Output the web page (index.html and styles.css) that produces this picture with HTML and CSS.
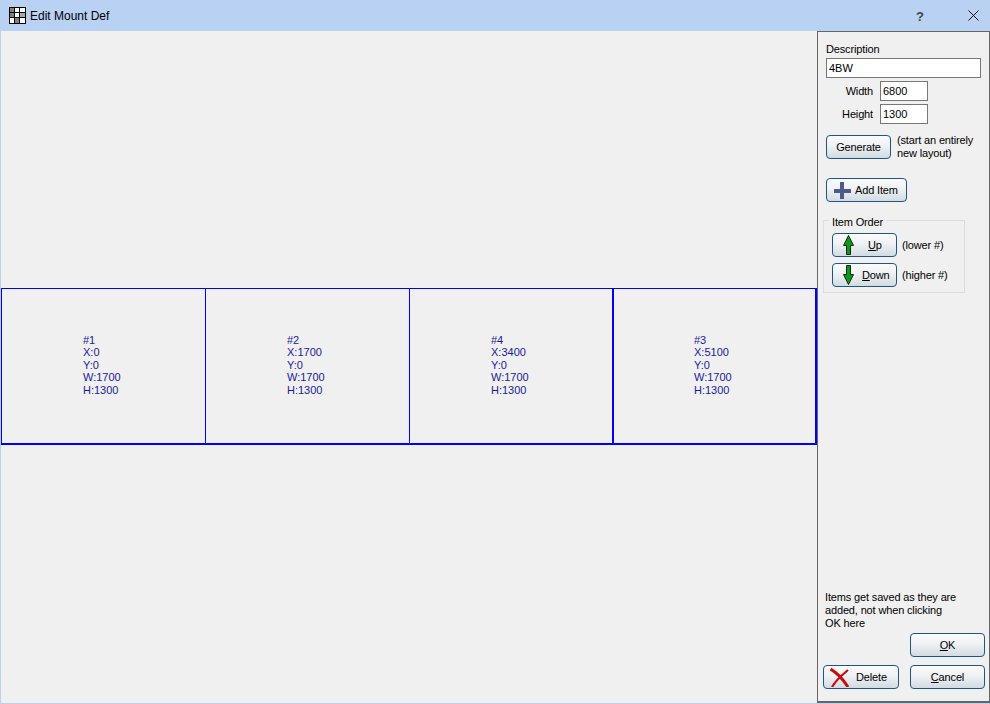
FILE: index.html
```html
<!DOCTYPE html>
<html lang="en">
<head>
    <meta charset="UTF-8">
    <title>Edit Mount Def</title>
    <link rel="stylesheet" href="styles.css">
</head>
<body>
    <div class="window">
        <div class="titlebar">
            <svg class="app-icon" width="17" height="17" viewBox="0 0 17 17">
                <rect x="0.5" y="0.5" width="16" height="16" fill="#fff" stroke="#000"/>
                <rect x="1" y="1" width="5" height="5" fill="#808080"/>
                <rect x="1" y="6" width="5" height="5" fill="#808080"/>
                <rect x="11" y="6" width="5" height="5" fill="#a8a8a8"/>
                <rect x="6" y="11" width="5" height="5" fill="#808080"/>
                <path d="M5.5 0v17M10.5 0v17M0 5.5h17M0 10.5h17" stroke="#000" fill="none"/>
            </svg>
            <span class="title">Edit Mount Def</span>
            <span class="help">?</span>
            <svg class="close" width="11" height="11" viewBox="0 0 11 11">
                <path d="M0.5 0.5l10 10M10.5 0.5l-10 10" stroke="#111" fill="none"/>
            </svg>
        </div>

        <div class="content">
            <div class="canvas">
                <div class="mount">
                    <div class="item">#1<br>X:0<br>Y:0<br>W:1700<br>H:1300</div>
                    <div class="item">#2<br>X:1700<br>Y:0<br>W:1700<br>H:1300</div>
                    <div class="item item-thick">#4<br>X:3400<br>Y:0<br>W:1700<br>H:1300</div>
                    <div class="item item-last">#3<br>X:5100<br>Y:0<br>W:1700<br>H:1300</div>
                </div>
            </div>

            <div class="panel">
                <label class="desc-label" for="description">Description</label>
                <input class="desc-input" id="description" type="text" value="4BW">

                <div class="size-row">
                    <label for="width">Width</label>
                    <input id="width" type="text" value="6800">
                </div>
                <div class="size-row">
                    <label for="height">Height</label>
                    <input id="height" type="text" value="1300">
                </div>

                <div class="generate-row">
                    <button class="btn btn-generate">Generate</button>
                    <span class="hint">(start an entirely<br>new layout)</span>
                </div>

                <button class="btn btn-add">
                    <svg width="17" height="17" viewBox="0 0 17 17">
                        <path d="M6 0h4v7h7v4h-7v6h-4v-6h-6v-4h6z" fill="#50588c"/>
                    </svg>
                    <span>Add Item</span>
                </button>

                <div class="group">
                    <span class="legend">Item Order</span>
                    <div class="order-row">
                        <button class="btn btn-order">
                            <svg width="11" height="20" viewBox="0 0 11 20">
                                <path d="M5.5 0.5l5 10h-3v9h-4v-9h-3z" fill="#0a9a14" stroke="#0c2a12"/>
                            </svg>
                            <span class="order-label order-up"><u>U</u>p</span>
                        </button>
                        <span class="hint">(lower #)</span>
                    </div>
                    <div class="order-row">
                        <button class="btn btn-order">
                            <svg width="11" height="20" viewBox="0 0 11 20">
                                <path d="M5.5 19.5l-5-10h3v-9h4v9h3z" fill="#0a9a14" stroke="#0c2a12"/>
                            </svg>
                            <span class="order-label"><u>D</u>own</span>
                        </button>
                        <span class="hint">(higher #)</span>
                    </div>
                </div>

                <p class="note">Items get saved as they are<br>added, not when clicking<br>OK here</p>

                <div class="actions">
                    <button class="btn btn-action btn-ok"><u>O</u>K</button>
                    <div class="actions-row">
                        <button class="btn btn-delete">
                            <svg width="20" height="20" viewBox="0 0 20 20">
                                <path d="M0.5 2c7 4 13 11 17.500 18" stroke="#c80c0c" stroke-width="3" fill="none"/>
                                <path d="M18 3c-6 5-12 10-16 17" stroke="#c80c0c" stroke-width="2.2" fill="none"/>
                            </svg>
                            <span>Delete</span>
                        </button>
                        <button class="btn btn-action"><u>C</u>ancel</button>
                    </div>
                </div>
            </div>
        </div>
    </div>
</body>
</html>
```

FILE: styles.css
```css
* {
    box-sizing: border-box;
}

html, body {
    margin: 0;
    padding: 0;
}

body {
    width: 990px;
    height: 704px;
    overflow: hidden;
    font-family: 'Liberation Sans', Arial, sans-serif;
    font-size: 11px;
    letter-spacing: -0.15px;
    color: #000;
}

.window {
    width: 990px;
    height: 704px;
    display: flex;
    flex-direction: column;
    background: #b9d1f3;
    padding: 0 1px 1px;
}

.titlebar {
    height: 31px;
    flex: none;
    display: flex;
    align-items: center;
    padding-left: 8px;
    letter-spacing: 0;
}

.app-icon {
    margin-right: 4px;
}

.title {
    flex: 1;
    font-size: 12px;
}

.help {
    width: 12px;
    margin-right: 40px;
    font-weight: bold;
    font-size: 13px;
    color: #444;
    padding-top: 2px;
}

.close {
    margin-right: 10px;
}

.content {
    flex: 1;
    display: flex;
    min-height: 0;
    background: #f0f0f0;
}

.canvas {
    width: 816px;
    flex: none;
    display: flex;
    align-items: center;
}

.mount {
    width: 816px;
    height: 157px;
    display: flex;
    border: solid #0000ff;
    border-width: 1px 2px 2px 1px;
    position: relative;
    top: -1px;
}

.item {
    width: 204px;
    flex: none;
    border-right: 1px solid #0000ff;
    padding: 45px 0 0 81px;
    letter-spacing: 0;
    line-height: 12.5px;
    color: #1a1aa0;
}

.item-thick {
    border-right-width: 2px;
}

.item-last {
    width: 201px;
    border-right: none;
    padding-left: 80px;
}

.panel {
    flex: 1;
    display: flex;
    flex-direction: column;
    align-items: flex-start;
    border: 1px solid #666;
    border-bottom-width: 2px;
    padding: 11px 4px 12px 8px;
    line-height: 13px;
}

.desc-label {
    display: block;
    margin-bottom: 2px;
}

input {
    font: inherit;
    letter-spacing: 0;
    border: 1px solid #777;
    background: #fff;
    padding: 0 2px;
    height: 20px;
    outline: none;
    color: #000;
}

.desc-input {
    width: 155px;
}

.size-row {
    display: flex;
    align-items: center;
    margin-top: 3px;
}

.size-row label {
    width: 47px;
    margin-right: 7px;
    text-align: right;
}

.size-row input {
    width: 48px;
}

.btn {
    font: inherit;
    letter-spacing: inherit;
    color: #000;
    height: 24px;
    padding: 0;
    border: 1px solid #1d5684;
    border-radius: 4px;
    background: linear-gradient(to bottom, #fbfbfc, #eff1f3 45%, #d2dbe2);
    display: flex;
    align-items: center;
    justify-content: center;
}

.generate-row {
    display: flex;
    align-items: center;
    margin-top: 10px;
}

.btn-generate {
    width: 65px;
    margin-right: 6px;
}

.hint {
    line-height: 13px;
}

.btn-add {
    width: 81px;
    margin-top: 18px;
    padding-left: 7px;
    justify-content: flex-start;
}

.btn-add svg {
    margin-right: 4px;
}

.group {
    width: 142px;
    height: 73px;
    margin: 18px 0 0 -3px;
    border: 1px solid #dcdcdc;
    padding: 12px 0 0 8px;
    position: relative;
}

.legend {
    position: absolute;
    top: -5px;
    left: 5px;
    padding: 0 3px;
    background: #f0f0f0;
}

.order-row {
    display: flex;
    align-items: center;
    margin-bottom: 6px;
}

.btn-order {
    width: 65px;
    margin-right: 5px;
    padding-left: 10px;
    justify-content: flex-start;
}

.order-label {
    margin-left: 8px;
}

.order-up {
    margin-left: 14px;
}

.note {
    margin: auto 0 0 -1px;
    line-height: 13px;
}

.actions {
    margin: 3px 0 0 -3px;
    width: 162px;
}

.btn-action {
    width: 75px;
}

.btn-ok {
    margin-left: 87px;
}

.actions-row {
    display: flex;
    justify-content: space-between;
    margin-top: 8px;
}

.btn-delete {
    width: 76px;
    justify-content: flex-start;
    padding-left: 6px;
}

.btn-delete svg {
    margin-right: 6px;
}
```
